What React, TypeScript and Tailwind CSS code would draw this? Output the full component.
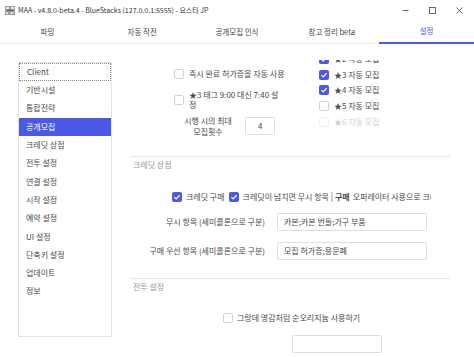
import React from "react";

function Check({ checked, disabled }: { checked?: boolean; disabled?: boolean }) {
  if (checked)
    return (
      <span className="w-[10px] h-[10px] rounded-[2px] bg-[#4a5ae6] flex items-center justify-center shrink-0">
        <svg width="8" height="8" viewBox="0 0 8 8">
          <path d="M1.4 4.1 L3.2 5.9 L6.6 2.2" stroke="white" strokeWidth="1.3" fill="none" />
        </svg>
      </span>
    );
  return (
    <span
      className={
        disabled
          ? "w-[10px] h-[10px] rounded-[2px] border border-[#efefef] bg-white shrink-0"
          : "w-[10px] h-[10px] rounded-[2px] border border-[#d2d2d2] bg-white shrink-0"
      }
    />
  );
}

const tabs = ["파밍", "자동 작전", "공개모집 인식", "창고 정리 beta", "설정"];
const side = [
  "Client",
  "기반시설",
  "통합전략",
  "공개모집",
  "크레딧 상점",
  "전투 설정",
  "연결 설정",
  "시작 설정",
  "예약 설정",
  "UI 설정",
  "단축키 설정",
  "업데이트",
  "정보",
];

export default function App() {
  return (
    <div className="w-[474px] h-[357px] bg-white overflow-hidden text-[8px] text-[#4a4a4a] font-['Noto_Sans_CJK_KR',sans-serif] leading-none">
      {/* title bar */}
      <div className="h-[20px] flex items-center">
        <svg className="ml-[5px]" width="10" height="9" viewBox="0 0 10 9">
          <rect x="0" y="0" width="10" height="9" fill="#9a9a9a" />
          <rect x="1" y="1" width="3" height="2" fill="#e8e8e8" />
          <rect x="6" y="1" width="3" height="2" fill="#e8e8e8" />
          <rect x="2" y="4" width="6" height="1" fill="#555" />
          <rect x="1" y="6" width="2" height="2" fill="#e0e0e0" />
          <rect x="5" y="6" width="4" height="2" fill="#d0d0d0" />
        </svg>
        <span className="ml-[3px] text-[7px] text-[#333] whitespace-nowrap">
          MAA - v4.8.0-beta.4 - BlueStacks (127.0.0.1:5555) - 요스타 JP
        </span>
        <div className="ml-auto mr-[1px] flex items-center">
          <div className="w-[27px] h-[20px] flex items-center justify-center">
            <svg width="7" height="7" viewBox="0 0 7 7">
              <path d="M0.5 3.5 H6.5" stroke="#444" strokeWidth="0.8" />
            </svg>
          </div>
          <div className="w-[27px] h-[20px] flex items-center justify-center">
            <svg width="7" height="7" viewBox="0 0 7 7">
              <rect x="0.5" y="0.5" width="6" height="6" stroke="#444" strokeWidth="0.8" fill="none" />
            </svg>
          </div>
          <div className="w-[27px] h-[20px] flex items-center justify-center">
            <svg width="7" height="7" viewBox="0 0 7 7">
              <path d="M0.5 0.5 L6.5 6.5 M6.5 0.5 L0.5 6.5" stroke="#444" strokeWidth="0.8" />
            </svg>
          </div>
        </div>
      </div>

      {/* tabs */}
      <div className="h-[24px] flex border-b border-[#ececec] text-[7.5px]">
        {tabs.map((t, i) => (
          <div
            key={t}
            className={
              i === 4
                ? "flex-1 flex items-center justify-center text-[#4a5ae6] border-b-2 border-[#4a5ae6] -mb-px"
                : "flex-1 flex items-center justify-center text-[#444]"
            }
          >
            {t}
          </div>
        ))}
      </div>

      {/* body */}
      <div className="flex h-[312px]">
        {/* sidebar */}
        <div className="ml-[18px] mt-[18px] w-[94px] h-[275px] border border-[#e3e3e3] self-start">
          {side.map((s, i) => (
            <div
              key={s}
              className={
                i === 0
                  ? "h-[18px] pl-[7px] flex items-center border border-dotted border-[#888]"
                  : i === 3
                  ? "h-[18.3px] pl-[7px] flex items-center bg-[#4a5ae6] text-white"
                  : "h-[18.3px] pl-[7px] flex items-center"
              }
            >
              {s}
            </div>
          ))}
        </div>

        {/* main */}
        <div className="ml-[8px] mt-[16px] flex-1 h-[297px] overflow-hidden">
          <div className="-mt-[9px]">
            {/* section 1 */}
            <div className="flex">
              <div className="ml-[54px] w-[131px] shrink-0">
                <div className="mt-[18px] h-[10px] flex items-center gap-[5px]">
                  <Check />
                  <span className="whitespace-nowrap">즉시 완료 허가증을 자동 사용</span>
                </div>
                <div className="mt-[11px] h-[19px] flex items-center gap-[5px]">
                  <Check />
                  <span className="whitespace-nowrap leading-[9.5px]">
                    ★3 태그 9:00 대신 7:40 설
                    <br />
                    정
                  </span>
                </div>
                <div className="mt-[6px] h-[22px] flex items-center">
                  <div className="ml-[6px] w-[56px] text-center leading-[11px] whitespace-nowrap">
                    시행 시의 최대
                    <br />
                    모집횟수
                  </div>
                  <div className="ml-[9px] w-[30px] h-[18px] border border-[#dedede] rounded-[2px] flex items-center pl-[12px]">
                    4
                  </div>
                </div>
              </div>
              <div className="ml-[14px]">
                {[
                  { t: "★2 자동 모집", c: true },
                  { t: "★3 자동 모집", c: true },
                  { t: "★4 자동 모집", c: true },
                  { t: "★5 자동 모집", c: false },
                  { t: "★6 자동 모집", c: false, d: true },
                ].map((r) => (
                  <div key={r.t} className="h-[15.75px] flex items-center gap-[5px]">
                    <Check checked={r.c} disabled={r.d} />
                    <span className={r.d ? "whitespace-nowrap text-[#cfcfcf]" : "whitespace-nowrap"}>{r.t}</span>
                  </div>
                ))}
              </div>
            </div>

            {/* section 2 */}
            <div className="mt-[19px] ml-[10px] w-[320px] border-t border-[#e6e6e6]" />
            <div className="mt-[3px] ml-[13px] h-[10px] flex items-center text-[#9a9a9a]">크레딧 상점</div>
            <div className="mt-[22px] ml-[52px] w-[259px] h-[10px] flex items-center overflow-hidden whitespace-nowrap">
              <Check checked />
              <span className="ml-[4px]">크레딧 구매</span>
              <span className="ml-[4px]">
                <Check checked />
              </span>
              <span className="ml-[4px]">크레딧이 넘치면 무시 항목</span>
              <span className="ml-[2px]">
                <Check />
              </span>
              <span className="ml-[2px] font-bold">구매</span>
              <span className="ml-[3px]">오퍼레이터 사용으로 크레딧 구매</span>
            </div>
            <div className="mt-[11px] h-[18px] flex items-center">
              <div className="w-[145px] text-right whitespace-nowrap">무시 항목 (세미콜론으로 구분)</div>
              <div className="ml-[12px] w-[150px] h-[18px] border border-[#dedede] rounded-[2px] flex items-center pl-[6px]">
                카본;카본 번들;가구 부품
              </div>
            </div>
            <div className="mt-[11px] h-[18px] flex items-center">
              <div className="w-[145px] text-right whitespace-nowrap">구매 우선 항목 (세미콜론으로 구분)</div>
              <div className="ml-[12px] w-[150px] h-[18px] border border-[#dedede] rounded-[2px] flex items-center pl-[6px]">
                모집 허가증;용문폐
              </div>
            </div>

            {/* section 3 */}
            <div className="mt-[18px] ml-[10px] w-[320px] border-t border-[#e6e6e6]" />
            <div className="mt-[3px] ml-[13px] h-[10px] flex items-center text-[#9a9a9a]">전투 설정</div>
            <div className="mt-[20.5px] ml-[103px] h-[10px] flex items-center gap-[4px] whitespace-nowrap">
              <Check />
              <span>그랑데 영감처럼 순오리지늄 사용하기</span>
            </div>
            <div className="mt-[12px] ml-[172px] w-[90px] h-[18px] border border-[#dedede] rounded-[2px]" />
          </div>
        </div>
      </div>
    </div>
  );
}
